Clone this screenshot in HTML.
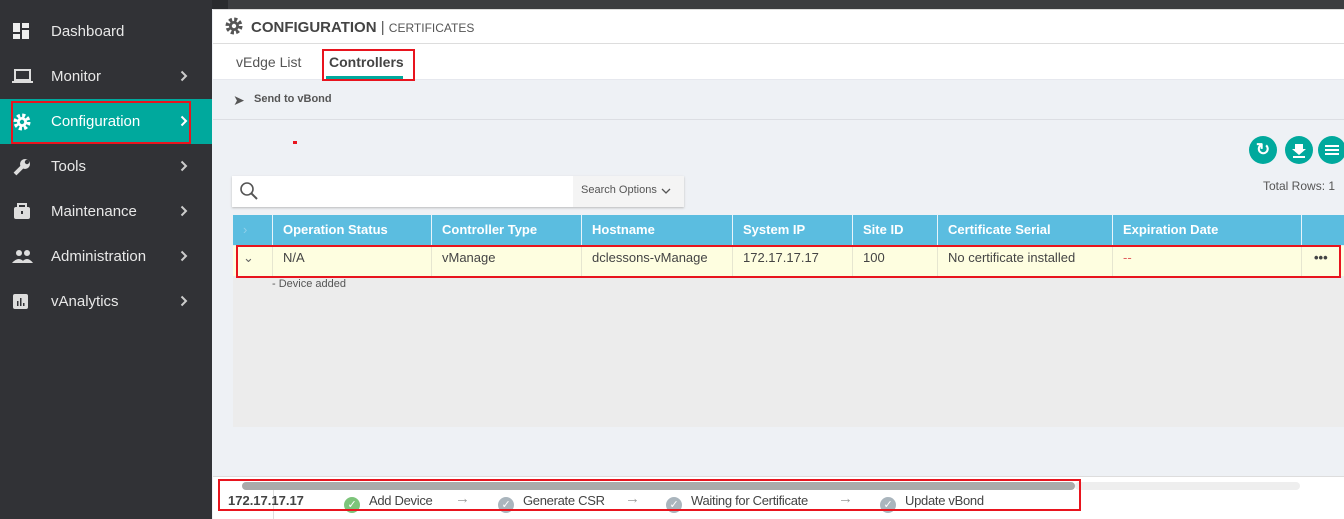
<!DOCTYPE html>
<html><head><style>
*{margin:0;padding:0;box-sizing:border-box}
body{width:1344px;height:519px;overflow:hidden;font-family:"Liberation Sans",Arial,sans-serif;background:#eef1f5;position:relative}
.a{position:absolute}
.side{left:0;top:0;width:212px;height:519px;background:#313236}
.item{position:absolute;left:0;width:212px;height:45px;color:#e8e8e8;font-size:15px;line-height:45px}
.item .t{position:absolute;left:51px}
.item .c{position:absolute;left:180px;top:16px;width:8px;height:12px}
.item svg{position:absolute;left:12px;top:13px}
.th{position:absolute;top:215px;height:30px;line-height:30px;color:#fff;font-weight:bold;font-size:13px;padding-left:10px;border-right:1px solid #e8f4fa}
.td{position:absolute;top:246px;height:30px;line-height:24px;color:#444;font-size:13px;padding-left:10px;border-right:1px solid #e6e6d0}
.chk{display:inline-block;width:16px;height:16px;border-radius:50%;vertical-align:-3px;margin-right:9px;color:#fff;font-size:11px;line-height:16px;text-align:center}
.step{position:absolute;top:493px;font-size:13px;color:#444;letter-spacing:-0.3px}
</style></head><body>
<div class="a side"></div>
<div class="a" style="left:212px;top:0;width:1132px;height:9px;background:#3c3d40"></div>
<div class="a" style="left:212px;top:0;width:16px;height:9px;background:#2a2b2e"></div>

<div class="item" style="top:9px"><svg width="18" height="18"><rect x="1" y="1" width="7" height="9" fill="#eee"/><rect x="10" y="1" width="7" height="5" fill="#eee"/><rect x="1" y="12" width="7" height="5" fill="#eee"/><rect x="10" y="8" width="7" height="9" fill="#eee"/></svg><span class="t">Dashboard</span></div>
<div class="item" style="top:54px"><svg width="22" height="18"><rect x="3" y="3" width="15" height="10" fill="none" stroke="#ddd" stroke-width="2"/><rect x="0" y="14" width="21" height="2" fill="#ddd"/></svg><span class="t">Monitor</span><svg class="c" style="left:180px;top:16px" width="8" height="12"><path d="M1.5 1.5 L6 6 L1.5 10.5" fill="none" stroke="#ccc" stroke-width="2"/></svg></div>
<div class="item" style="top:99px;background:#00a99d;color:#fff"><svg width="20" height="20"><circle cx="10" cy="10" r="6.5" fill="none" stroke="#fff" stroke-width="4" stroke-dasharray="3 2.1"/><circle cx="10" cy="10" r="5" fill="#fff"/><circle cx="10" cy="10" r="2.2" fill="#00a99d"/></svg><span class="t">Configuration</span><svg class="c" style="left:180px;top:16px" width="8" height="12"><path d="M1.5 1.5 L6 6 L1.5 10.5" fill="none" stroke="#fff" stroke-width="2"/></svg></div>
<div class="a" style="left:11px;top:101px;width:180px;height:43px;border:2px solid #e8141e"></div>
<div class="item" style="top:144px"><svg width="20" height="20"><path d="M3 17 L11 9" stroke="#ddd" stroke-width="4"/><circle cx="13" cy="7" r="5" fill="#ddd"/><circle cx="15" cy="5" r="2.2" fill="#313236"/></svg><span class="t">Tools</span><svg class="c" style="left:180px;top:16px" width="8" height="12"><path d="M1.5 1.5 L6 6 L1.5 10.5" fill="none" stroke="#ccc" stroke-width="2"/></svg></div>
<div class="item" style="top:189px"><svg width="20" height="18"><rect x="2" y="5" width="16" height="12" rx="2" fill="#ddd"/><rect x="6" y="2" width="8" height="4" fill="none" stroke="#ddd" stroke-width="2"/><rect x="9" y="9" width="2" height="3" fill="#313236"/></svg><span class="t">Maintenance</span><svg class="c" style="left:180px;top:16px" width="8" height="12"><path d="M1.5 1.5 L6 6 L1.5 10.5" fill="none" stroke="#ccc" stroke-width="2"/></svg></div>
<div class="item" style="top:234px"><svg width="22" height="18"><circle cx="7" cy="6" r="3" fill="#ddd"/><circle cx="15" cy="6" r="3" fill="#ddd"/><path d="M0 16 Q7 8 13 16Z M9 16 Q15 8 21 16Z" fill="#ddd"/></svg><span class="t">Administration</span><svg class="c" style="left:180px;top:16px" width="8" height="12"><path d="M1.5 1.5 L6 6 L1.5 10.5" fill="none" stroke="#ccc" stroke-width="2"/></svg></div>
<div class="item" style="top:279px"><svg width="18" height="18"><rect x="1" y="2" width="15" height="15" rx="2" fill="#ddd"/><rect x="5" y="9" width="1.5" height="5" fill="#313236"/><rect x="8" y="6" width="1.5" height="8" fill="#313236"/><rect x="11" y="11" width="1.5" height="3" fill="#313236"/></svg><span class="t">vAnalytics</span><svg class="c" style="left:180px;top:16px" width="8" height="12"><path d="M1.5 1.5 L6 6 L1.5 10.5" fill="none" stroke="#ccc" stroke-width="2"/></svg></div>

<div class="a" style="left:213px;top:9px;width:1131px;height:35px;background:#fff;border-top:1px solid #ddd;border-bottom:1px solid #ddd"></div>
<svg class="a" style="left:225px;top:17px" width="18" height="18"><circle cx="9" cy="9" r="6.5" fill="none" stroke="#555" stroke-width="4" stroke-dasharray="3 2.1"/><circle cx="9" cy="9" r="5" fill="#555"/><circle cx="9" cy="9" r="2.2" fill="#fff"/></svg>
<div class="a" style="left:251px;top:19px;font-size:15px;color:#444;font-weight:bold">CONFIGURATION <span style="font-weight:normal;color:#555">| <span style="font-size:12px">CERTIFICATES</span></span></div>
<div class="a" style="left:213px;top:44px;width:1131px;height:36px;background:#fff;border-bottom:1px solid #e6e8ee"></div>
<div class="a" style="left:236px;top:54px;font-size:14px;color:#555">vEdge List</div>
<div class="a" style="left:329px;top:54px;font-size:14px;color:#444;font-weight:bold">Controllers</div>
<div class="a" style="left:326px;top:76px;width:77px;height:3px;background:#00a99d"></div>
<div class="a" style="left:322px;top:49px;width:93px;height:32px;border:2px solid #e8141e"></div>
<div class="a" style="left:213px;top:119px;width:1131px;height:1px;background:#dcdee3"></div>
<div class="a" style="left:233px;top:92px;font-size:14px;color:#555">&#x27A4;</div>
<div class="a" style="left:254px;top:93px;font-size:11px;font-weight:bold;color:#555">Send to vBond</div>
<div class="a" style="left:293px;top:141px;width:4px;height:3px;background:#e8141e"></div>
<div class="a" style="left:1204px;top:336px;width:6px;height:3px;background:#e8141e"></div>

<div class="a" style="left:1249px;top:136px;width:28px;height:28px;border-radius:50%;background:#00a99d;color:#fff;text-align:center;font-size:17px;line-height:28px;font-weight:bold">&#x21BB;</div>
<div class="a" style="left:1285px;top:136px;width:28px;height:28px;border-radius:50%;background:#00a99d"><svg width="28" height="28"><path d="M10 8h8v5h3l-7 6-7-6h3z" fill="#fff"/><rect x="8" y="20" width="12" height="2" fill="#fff"/></svg></div>
<div class="a" style="left:1318px;top:136px;width:28px;height:28px;border-radius:50%;background:#00a99d"><svg width="28" height="28"><rect x="7" y="9" width="14" height="2" fill="#fff"/><rect x="7" y="13" width="14" height="2" fill="#fff"/><rect x="7" y="17" width="14" height="2" fill="#fff"/></svg></div>
<div class="a" style="left:1263px;top:179px;font-size:12px;color:#555">Total Rows: 1</div>

<div class="a" style="left:232px;top:176px;width:452px;height:31px;background:#fff;box-shadow:0 1px 2px #bbb"></div>
<div class="a" style="left:573px;top:176px;width:111px;height:31px;background:#f4f4f4;font-size:11px;color:#555;line-height:29px;padding-left:8px">Search Options</div>
<svg class="a" style="left:661px;top:187px" width="10" height="8"><path d="M1 2 L5 6 L9 2" fill="none" stroke="#555" stroke-width="1.3"/></svg>
<svg class="a" style="left:239px;top:181px" width="22" height="22"><circle cx="8" cy="8" r="6" fill="none" stroke="#555" stroke-width="1.6"/><path d="M12.5 12.5 L18 18" stroke="#555" stroke-width="2"/></svg>

<div class="a" style="left:233px;top:215px;width:1111px;height:212px;background:#ececec"></div>
<div class="a" style="left:233px;top:215px;width:1111px;height:30px;background:#5bbde0"></div>
<div class="th" style="left:233px;width:40px;color:#8fd0ea;font-weight:normal">&#x203A;</div>
<div class="th" style="left:273px;width:159px">Operation Status</div>
<div class="th" style="left:432px;width:150px">Controller Type</div>
<div class="th" style="left:582px;width:151px">Hostname</div>
<div class="th" style="left:733px;width:120px">System IP</div>
<div class="th" style="left:853px;width:85px">Site ID</div>
<div class="th" style="left:938px;width:175px">Certificate Serial</div>
<div class="th" style="left:1113px;width:189px">Expiration Date</div>
<div class="a" style="left:233px;top:246px;width:1111px;height:30px;background:#fefee0"></div>
<div class="td" style="left:233px;width:40px;color:#666">&#x2304;</div>
<div class="td" style="left:273px;width:159px">N/A</div>
<div class="td" style="left:432px;width:150px">vManage</div>
<div class="td" style="left:582px;width:151px">dclessons-vManage</div>
<div class="td" style="left:733px;width:120px">172.17.17.17</div>
<div class="td" style="left:853px;width:85px">100</div>
<div class="td" style="left:938px;width:175px">No certificate installed</div>
<div class="td" style="left:1113px;width:189px;color:#e06060">--</div>
<div class="td" style="left:1302px;width:42px;font-weight:bold;border:none;padding-left:12px">&bull;&bull;&bull;</div>
<div class="a" style="left:236px;top:245px;width:1105px;height:33px;border:2px solid #e8141e"></div>
<div class="a" style="left:272px;top:278px;font-size:11px;color:#555">- Device added</div>

<div class="a" style="left:213px;top:476px;width:1131px;height:43px;background:#fff;border-top:1px solid #ddd"></div>
<div class="a" style="left:242px;top:482px;width:833px;height:8px;border-radius:4px;background:#aaa"></div>
<div class="a" style="left:1075px;top:482px;width:225px;height:8px;border-radius:4px;background:#eee"></div>
<div class="a" style="left:273px;top:490px;width:1px;height:29px;background:#ddd"></div>
<div class="a" style="left:228px;top:493px;font-size:13px;font-weight:bold;color:#444">172.17.17.17</div>
<div class="step" style="left:344px"><span class="chk" style="background:#7dc47a">&#x2713;</span>Add Device</div>
<div class="step" style="left:455px;color:#999;font-size:15px;top:490px">&#x2192;</div>
<div class="step" style="left:498px"><span class="chk" style="background:#aab5bd">&#x2713;</span>Generate CSR</div>
<div class="step" style="left:625px;color:#999;font-size:15px;top:490px">&#x2192;</div>
<div class="step" style="left:666px"><span class="chk" style="background:#aab5bd">&#x2713;</span>Waiting for Certificate</div>
<div class="step" style="left:838px;color:#999;font-size:15px;top:490px">&#x2192;</div>
<div class="step" style="left:880px"><span class="chk" style="background:#aab5bd">&#x2713;</span>Update vBond</div>
<div class="a" style="left:218px;top:479px;width:863px;height:32px;border:2px solid #e8141e"></div>
</body></html>
